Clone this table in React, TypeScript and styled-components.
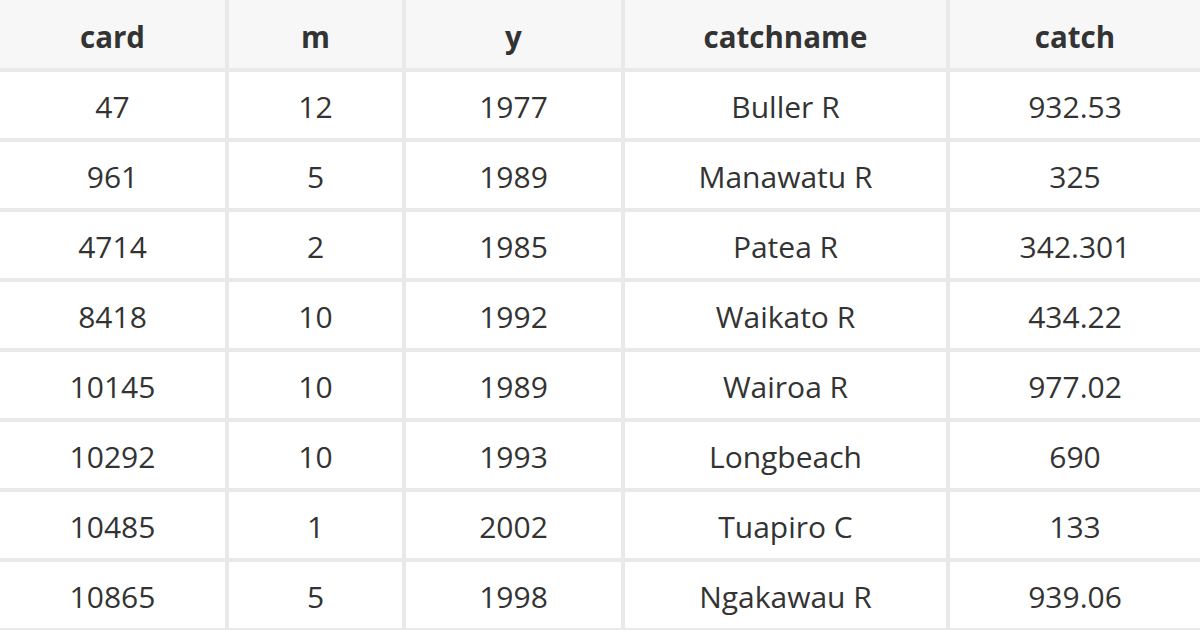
import React from 'react';
import styled, { createGlobalStyle } from 'styled-components';

const GlobalStyle = createGlobalStyle`
  html, body {
    margin: 0;
    padding: 0;
    background: #ffffff;
  }
  body {
    font-family: "Open Sans", "Liberation Sans", sans-serif;
    color: #333333;
    overflow: hidden;
  }
`;

interface CatchRow {
  card: string;
  m: string;
  y: string;
  catchname: string;
  catch: string;
}

const columns: (keyof CatchRow)[] = ['card', 'm', 'y', 'catchname', 'catch'];

const rows: CatchRow[] = [
  { card: '47', m: '12', y: '1977', catchname: 'Buller R', catch: '932.53' },
  { card: '961', m: '5', y: '1989', catchname: 'Manawatu R', catch: '325' },
  { card: '4714', m: '2', y: '1985', catchname: 'Patea R', catch: '342.301' },
  { card: '8418', m: '10', y: '1992', catchname: 'Waikato R', catch: '434.22' },
  { card: '10145', m: '10', y: '1989', catchname: 'Wairoa R', catch: '977.02' },
  { card: '10292', m: '10', y: '1993', catchname: 'Longbeach', catch: '690' },
  { card: '10485', m: '1', y: '2002', catchname: 'Tuapiro C', catch: '133' },
  { card: '10865', m: '5', y: '1998', catchname: 'Ngakawau R', catch: '939.06' },
];

const Table = styled.div`
  display: grid;
  grid-template-columns: 225px 173px 215px 321px 250px;
  grid-template-rows: 68px repeat(8, 66px);
  gap: 4px;
  width: 1200px;
  height: 630px;
  background: #e9e9e9;
  overflow: hidden;
`;

const Cell = styled.div<{ $head?: boolean }>`
  display: flex;
  align-items: center;
  justify-content: center;
  background: ${props => (props.$head ? '#f7f7f7' : '#ffffff')};
  font-size: ${props => (props.$head ? '29.5px' : '30px')};
  font-weight: ${props => (props.$head ? 700 : 400)};
  color: #333333;
  padding-top: ${props => (props.$head ? '4px' : '2px')};
  box-sizing: border-box;
  white-space: nowrap;
`;

const App: React.FC = () => {
  return (
    <>
      <GlobalStyle />
      <Table>
        {columns.map(col => (
          <Cell key={col} $head>{col}</Cell>
        ))}
        {rows.map(row =>
          columns.map(col => (
            <Cell key={`${row.card}-${col}`}>{row[col]}</Cell>
          ))
        )}
      </Table>
    </>
  );
};

export default App;
